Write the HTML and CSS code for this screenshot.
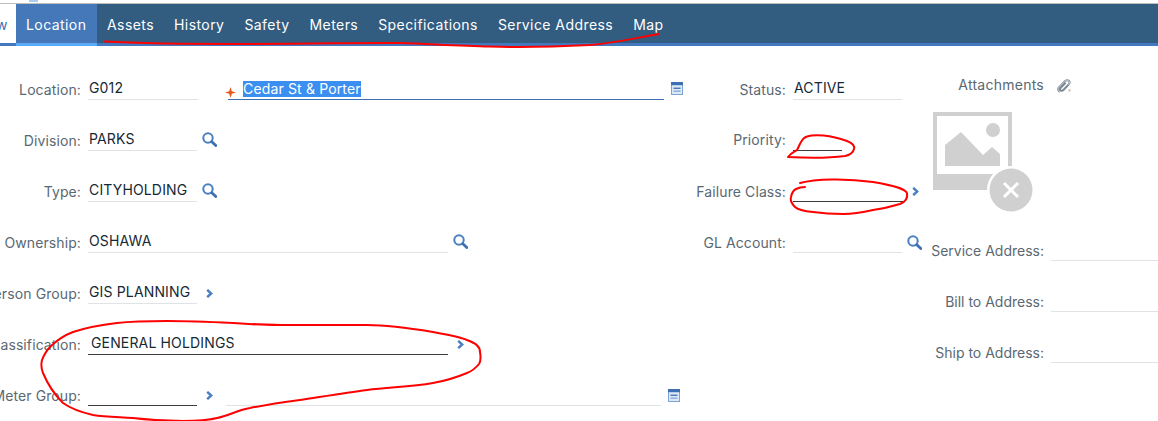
FILE: index.html
```html
<!DOCTYPE html>
<html lang="en">
<head>
<meta charset="utf-8">
<title>Location</title>
<link rel="stylesheet" href="styles.css">
</head>
<body>
<div class="page">
  <svg width="0" height="0" class="defs">
    <defs>
      <symbol id="search" viewBox="0 0 15 15"><circle cx="6" cy="6" r="4.7" fill="none" stroke="#4a7fc1" stroke-width="2"/><path d="M9.8 9.8 L13.8 13.6" stroke="#3d70b2" stroke-width="2.8" stroke-linecap="round"/></symbol>
      <symbol id="chev" viewBox="0 0 7 9"><path d="M1.2 0.8 L5.2 4.5 L1.2 8.2" fill="none" stroke="#4a7fc1" stroke-width="2.4"/></symbol>
      <symbol id="doc" viewBox="0 0 12 13"><rect x="0.5" y="0.5" width="11" height="12" fill="#dce8f6" stroke="#7ba3d6"/><rect width="12" height="3.2" fill="#3d70b2"/><rect x="2.5" y="5.6" width="7" height="1.3" fill="#3d70b2"/><rect x="2.5" y="8.4" width="7" height="1.6" fill="#8fb3de"/></symbol>
    </defs>
  </svg>
  <div class="topstrip"><span class="topmark"></span></div>
  <nav class="tabs">
    <a class="tab tab-prev">w</a>
    <a class="tab tab-active">Location</a>
    <a class="tab">Assets</a>
    <a class="tab">History</a>
    <a class="tab">Safety</a>
    <a class="tab">Meters</a>
    <a class="tab">Specifications</a>
    <a class="tab">Service Address</a>
    <a class="tab">Map</a>
  </nav>
  <main class="form">
    <section class="col col-left">
      <div class="row">
        <label class="lab">Location:</label><div class="field w110">G012</div>
        <div class="field desc"><span class="star"><svg width="11" height="11" viewBox="0 0 11 11"><path d="M5.5 0 L6.8 4.2 L11 5.5 L6.8 6.8 L5.5 11 L4.2 6.8 L0 5.5 L4.2 4.2 Z" fill="#e8591a"/></svg></span><span class="selected">Cedar St &amp; Porter</span></div>
        <svg class="ico doc1"><use href="#doc"/></svg>
      </div>
      <div class="row"><label class="lab">Division:</label><div class="field w109">PARKS</div><svg class="ico search"><use href="#search"/></svg></div>
      <div class="row"><label class="lab">Type:</label><div class="field w109">CITYHOLDING</div><svg class="ico search"><use href="#search"/></svg></div>
      <div class="row"><label class="lab">Ownership:</label><div class="field w360">OSHAWA</div><svg class="ico search"><use href="#search"/></svg></div>
      <div class="row"><label class="lab">Person Group:</label><div class="field w109">GIS PLANNING</div><svg class="ico chev"><use href="#chev"/></svg></div>
      <div class="row"><label class="lab">Classification:</label><div class="field w360 dark inset">GENERAL HOLDINGS</div><svg class="ico chev"><use href="#chev"/></svg></div>
      <div class="row"><label class="lab">Meter Group:</label><div class="field w109 dark"></div><svg class="ico chev"><use href="#chev"/></svg><div class="field w435 desc2"></div><svg class="ico doc2"><use href="#doc"/></svg></div>
    </section>
    <section class="col col-mid">
      <div class="row"><label class="lab lab-mid">Status:</label><div class="field w109">ACTIVE</div></div>
      <div class="row"><label class="lab lab-mid raised">Priority:</label><div class="field w49 dark"></div></div>
      <div class="row"><label class="lab lab-mid">Failure Class:</label><div class="field w110 dark"></div><svg class="ico chev"><use href="#chev"/></svg></div>
      <div class="row"><label class="lab lab-mid">GL Account:</label><div class="field w109"></div><svg class="ico search search-gl"><use href="#search"/></svg></div>
    </section>
    <section class="col col-right">
      <div class="attach">
        <span class="attach-text">Attachments</span>
        <svg class="clip" width="15" height="14" viewBox="0 0 15 14"><path d="M3 12.5 C1 12 0.6 10 1.8 8.6 L7.6 2.4 C9 1 11 0.8 12 2 C13 3.2 12.4 4.8 11.2 6 L6.4 11 C5.4 12 4 12 3.4 11.2 C2.8 10.4 3.2 9.4 4 8.6 L8.6 3.8" fill="none" stroke="#7d8a96" stroke-width="2"/><path d="M3 12.5 C1 12 0.6 10 1.8 8.6 L7.6 2.4 C9 1 11 0.8 12 2 C13 3.2 12.4 4.8 11.2 6" fill="none" stroke="#dfe3e6" stroke-width="0.7"/><path d="M11 11 L12.5 10 L14 11.5 L12.5 13 Z" fill="#c9bfa8"/></svg>
      </div>
      <svg class="noimage" width="101" height="101" viewBox="0 0 101 101">
        <rect x="0" y="0" width="79" height="78" fill="#d0d0d0"/>
        <rect x="4" y="4" width="71" height="58" fill="#fff"/>
        <circle cx="60" cy="18" r="7" fill="#d0d0d0"/>
        <path d="M12 54 V33 L28 20 L50 43 L59 35 L67 42 V54 Z" fill="#d0d0d0"/>
        <circle cx="78" cy="78" r="24" fill="#fff"/>
        <circle cx="78" cy="78" r="21.5" fill="#d0d0d0"/>
        <path d="M71 71 L85 85 M85 71 L71 85" stroke="#fff" stroke-width="3"/>
      </svg>
      <div class="row"><label class="lab lab-right">Service Address:</label><div class="field w107"></div></div>
      <div class="row"><label class="lab lab-right">Bill to Address:</label><div class="field w107"></div></div>
      <div class="row"><label class="lab lab-right">Ship to Address:</label><div class="field w107"></div></div>
    </section>
  </main>
  <svg class="ink" width="1158" height="421" viewBox="0 0 1158 421">
    <path d="M105 41.5 C130 43 180 44 250 44 C320 44 360 42.5 400 43 C430 44 460 46 490 46.5 C520 47.5 550 47 590 45 C615 43 635 38 659 34"/>
    <path d="M788 157 C792 152 794 152 797 150 C800 145 801 138 807 136.5 C815 134 830 135 847 141 C852 143 855 146 854 149 C853 153 850 155 845 156 C830 158 805 158 788 157"/>
    <path d="M800 183 C815 179 845 178 873 182 C890 185 905 188 907 193 C908 198 905 202 900 204 C890 207 880 209 873 210 C860 213 850 214 843 214 C830 214 820 213 813 212 C803 211 797 209 795 207 C791 203 790 200 791 197 C792 192 794 190 796 189 C798 188 802 187 805 187"/>
    <path d="M253 324 C265 324.500 275 325 287 325 C310 325 340 325 367 325 C390 325 415 329 433 332 C450 335 460 337 467 340 C475 343 480 346 480 352 C481 358 481 361 479 364 C475 369 472 371 467 373 C455 378 445 381 433 383 C410 387 390 387 367 390 C345 393 320 397 300 400 C285 402 265 405 250 408 C238 410 228 416 217 418 C205 421 195 421 183 421 C165 421 150 420 133 418 C118 417 105 417 93 415 C80 412 70 408 63 403 C55 395 48 385 43 373 C41 368 41 364 42 360 C44 355 46 351 50 347 C56 341 65 335 73 332 C85 328 100 325 117 323 C135 321 150 321 167 321 C190 321 212 322 233 323 C247 324 262 325 277 325"/>
  </svg>
</div>
</body>
</html>
```
FILE: styles.css
```css
* { box-sizing: border-box; }
html, body { margin: 0; padding: 0; background: #fff; }
.page { position: relative; width: 1158px; height: 421px; overflow: hidden; font-family: "Inter", "Liberation Sans", sans-serif; font-size: 14px; color: #152935; }
.defs { position: absolute; }
.topstrip { height: 4px; background: #fff; border-bottom: 1px solid #bdbdbd; padding-left: 29px; }
.topmark { display: block; width: 9px; height: 2px; background: #a9cdf2; }
.tabs { display: flex; height: 42px; background: #325c80; border-bottom: 3px solid #4178be; }
.tab { height: 42px; padding: 0 10px; line-height: 41px; color: #fff; white-space: nowrap; letter-spacing: 0.43px; }
.tab-prev { width: 16px; padding: 0; background: #fff; color: #3d70b2; text-indent: -4px; height: 39px; line-height: 41px; }
.tab-active { width: 81px; background: #4578b9; border-bottom: 3px solid #5aaafa; }
.form { display: grid; grid-template-columns: 690px 240px 1fr; padding-top: 32px; }
.col { display: flex; flex-direction: column; min-width: 0; }
.row { display: flex; align-items: flex-start; height: 51px; flex: none; }
.lab { flex: none; width: 81px; margin-right: 7px; display: flex; justify-content: flex-end; white-space: nowrap; padding-top: 2px; line-height: 20px; color: #5a6872; letter-spacing: 0.1px; }
.lab-mid { width: 96px; }
.lab-right { width: 114px; letter-spacing: 0; }
.raised { padding-top: 1px; }
.field { flex: none; height: 22px; line-height: 20px; padding-left: 1px; border-bottom: 1px solid #dfe3e6; white-space: nowrap; letter-spacing: 0.15px; }
.w110 { width: 110px; }
.w109 { width: 109px; }
.w107 { width: 107px; }
.w49 { width: 49px; }
.w360 { width: 360px; }
.w435 { width: 435px; }
.dark { border-bottom-color: #3d3d3d; }
.inset { padding-left: 3px; }
.desc { position: relative; width: 436px; margin-left: 30px; padding-left: 15px; border-bottom-color: #3d70b2; }
.desc2 { margin-left: 13px; }
.star { position: absolute; left: -3px; top: 9px; line-height: 0; }
.selected { background: #3b8ff0; color: #fff; display: inline-block; line-height: 16px; margin-top: 3px; vertical-align: top; }
.ico { flex: none; display: block; }
.search { width: 15px; height: 15px; margin: 3px 0 0 5px; }
.search-gl { margin: 4px 0 0 5px; }
.chev { width: 7px; height: 9px; margin: 7px 0 0 9px; }
.doc1 { width: 12px; height: 13px; margin: 4px 0 0 7px; }
.doc2 { width: 12px; height: 13px; margin: 5px 0 0 7px; }
.col-right { margin-top: -3px; }
.attach { display: flex; align-items: center; height: 20px; flex: none; margin-top: -1px; margin-bottom: 1px; }
.attach-text { width: 114px; text-align: right; color: #5a6872; white-space: nowrap; letter-spacing: 0.25px; }
.clip { margin: 4px 0 0 13px; }
.noimage { display: block; flex: none; margin: 17px 0 26px 3px; }
.ink { position: absolute; left: 0; top: 0; pointer-events: none; }
.ink path { fill: none; stroke: #f00; stroke-width: 2; stroke-linecap: round; stroke-linejoin: round; }
```
